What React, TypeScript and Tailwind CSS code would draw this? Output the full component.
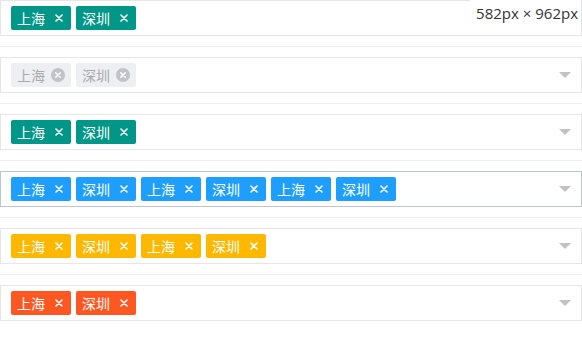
import React from "react";

type TagColor = "green" | "blue" | "yellow" | "red";

const bg: Record<TagColor, string> = {
  green: "bg-[#009688]",
  blue: "bg-[#1e9fff]",
  yellow: "bg-[#ffb800]",
  red: "bg-[#ff5722]",
};

function CloseX() {
  return (
    <svg width="8" height="8" viewBox="0 0 8 8" className="ml-[10px]">
      <path d="M1 1 L7 7 M7 1 L1 7" stroke="white" strokeWidth="1.6" strokeLinecap="round" />
    </svg>
  );
}

function Tag({ label, color }: { label: string; color: TagColor }) {
  return (
    <div className={`flex items-center h-6 rounded-[2px] pl-[6px] pr-[8px] text-white ${bg[color]}`}>
      <span className="leading-6">{label}</span>
      <CloseX />
    </div>
  );
}

function DisabledTag({ label }: { label: string }) {
  return (
    <div className="flex items-center h-6 rounded-[2px] pl-[6px] pr-[6px] bg-[#eeeff3] text-[#a9a9ab]">
      <span className="leading-6">{label}</span>
      <svg width="14" height="14" viewBox="0 0 14 14" className="ml-[6px]">
        <circle cx="7" cy="7" r="7" fill="#c2c3c8" />
        <path d="M4.7 4.7 L9.3 9.3 M9.3 4.7 L4.7 9.3" stroke="white" strokeWidth="1.5" strokeLinecap="round" />
      </svg>
    </div>
  );
}

function Arrow() {
  return (
    <div className="ml-auto mr-[10px] w-0 h-0 border-l-[6px] border-r-[6px] border-t-[6px] border-l-transparent border-r-transparent border-t-[#c2c2c2]" />
  );
}

function Select({ children, active, arrow = true }: { children: React.ReactNode; active?: boolean; arrow?: boolean }) {
  return (
    <div
      className={`flex items-center h-9 border pl-[10px] gap-[5px] bg-white ${
        active ? "border-[#c0c4cc]" : "border-[#e6e6e6]"
      }`}
    >
      {children}
      {arrow && <Arrow />}
    </div>
  );
}

function Divider() {
  return <div className="h-px bg-[#eeeeee] my-[10px]" />;
}

export default function App() {
  return (
    <div
      className="relative w-[582px] h-[349px] bg-white text-sm"
      style={{ fontFamily: '"Noto Sans CJK SC", "Noto Sans", sans-serif' }}
    >
      <Select arrow={false}>
        <Tag label="上海" color="green" />
        <Tag label="深圳" color="green" />
      </Select>
      <Divider />
      <Select>
        <DisabledTag label="上海" />
        <DisabledTag label="深圳" />
      </Select>
      <Divider />
      <Select>
        <Tag label="上海" color="green" />
        <Tag label="深圳" color="green" />
      </Select>
      <Divider />
      <Select active>
        <Tag label="上海" color="blue" />
        <Tag label="深圳" color="blue" />
        <Tag label="上海" color="blue" />
        <Tag label="深圳" color="blue" />
        <Tag label="上海" color="blue" />
        <Tag label="深圳" color="blue" />
      </Select>
      <Divider />
      <Select>
        <Tag label="上海" color="yellow" />
        <Tag label="深圳" color="yellow" />
        <Tag label="上海" color="yellow" />
        <Tag label="深圳" color="yellow" />
      </Select>
      <Divider />
      <Select>
        <Tag label="上海" color="red" />
        <Tag label="深圳" color="red" />
      </Select>

      <div
        className="absolute top-0 right-px w-[111px] h-[28px] bg-white text-[15px] text-[#333] flex items-center justify-end pr-[3px]"
        style={{ fontFamily: '"Open Sans", "Noto Sans", sans-serif' }}
      >
        582px × 962px
      </div>
    </div>
  );
}
